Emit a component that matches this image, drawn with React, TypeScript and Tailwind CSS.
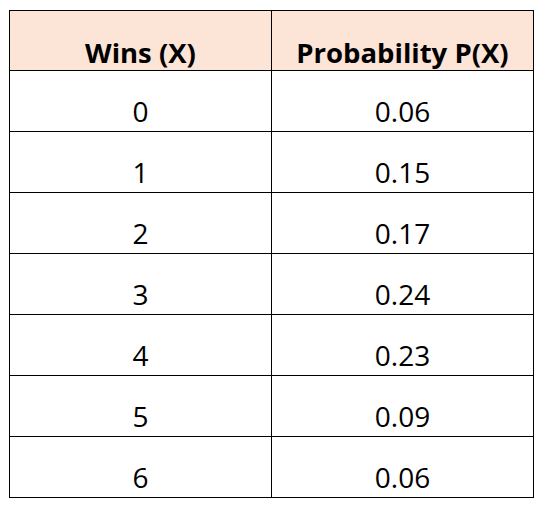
import React from "react";

const rows: [string, string][] = [
  ["0", "0.06"],
  ["1", "0.15"],
  ["2", "0.17"],
  ["3", "0.24"],
  ["4", "0.23"],
  ["5", "0.09"],
  ["6", "0.06"],
];

export default function App() {
  return (
    <div className="w-[547px] h-[507px] bg-white pl-[9px] pt-[10px]" style={{ fontFamily: "'Open Sans', sans-serif" }}>
      <table className="border-collapse w-[525px] table-fixed text-black">
        <thead>
          <tr className="bg-[#fce4d6]">
            <th className="border border-black h-[60px] align-bottom pb-[4px] text-[27.5px] font-bold leading-none">Wins (X)</th>
            <th className="border border-black h-[60px] align-bottom pb-[4px] text-[27.5px] font-bold leading-none">Probability P(X)</th>
          </tr>
        </thead>
        <tbody>
          {rows.map(([a, b]) => (
            <tr key={a}>
              <td className="border border-black h-[61px] align-bottom pb-[6px] text-center text-[28px] leading-none">{a}</td>
              <td className="border border-black h-[61px] align-bottom pb-[6px] text-center text-[28px] leading-none">{b}</td>
            </tr>
          ))}
        </tbody>
      </table>
    </div>
  );
}
